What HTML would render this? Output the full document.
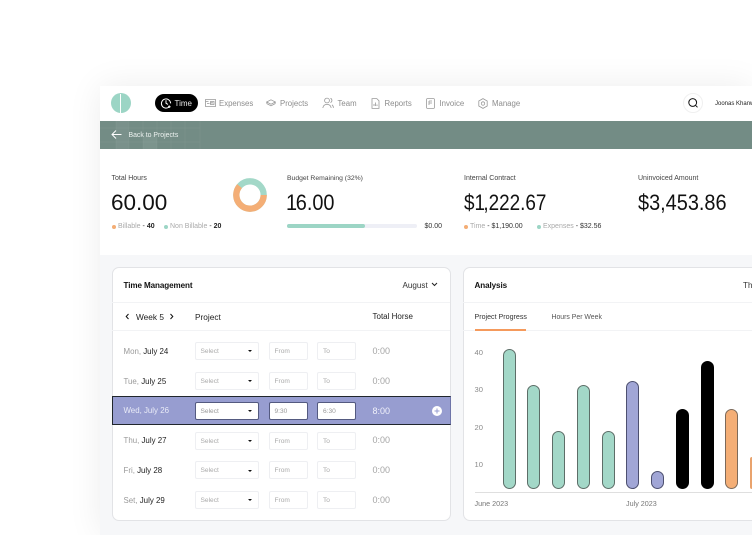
<!DOCTYPE html>
<html><head><meta charset="utf-8">
<style>
html,body{margin:0;padding:0;background:#fff;overflow:hidden}
#w{position:relative;width:752px;height:535px;overflow:hidden;background:#fff}
#p{position:absolute;left:0;top:0;width:752px;height:535px;overflow:hidden;background:#fff;font-family:"Liberation Sans",sans-serif;color:#111;filter:blur(.25px)}
#p div{position:absolute}
.t{position:absolute;white-space:nowrap;line-height:12px;height:12px}
.nav{font-size:7.800px;color:#8d8d8d;top:97.500px}
.big{font-size:22.500px;line-height:26px;height:26px;color:#111;top:190px;transform-origin:0 50%}
.big u{text-decoration:none}
.lab{font-size:7px;color:#444;top:172.500px}
.leg{font-size:7px;color:#aaa;top:220.500px}
.leg b{color:#222;font-weight:bold}
.leg i{font-style:normal;color:#333}
.dot{width:4px;height:4px;border-radius:50%;top:224.500px}
.box{background:#fff;border:1px solid #eeeff2;border-radius:2px;box-sizing:border-box;height:18px}
.sel{border-color:#545a80}
.ph{font-size:6.600px;color:#aaa}
.day{font-size:7.900px;color:#9a9a9a;left:123.500px}
.day b{font-weight:normal;color:#222}
.tot{font-size:9px;color:#a5a5a5;left:372.500px}
.car{width:0;height:0;border-left:2.500px solid transparent;border-right:2.500px solid transparent;border-top:2.500px solid #111}
.bar{width:13px;border-radius:7px;border:1px solid #5d6e68;box-sizing:border-box;background:#a3d8c8}
.pu{background:#a1a6d6;border-color:#4d5070}
.bk{background:#000;border-color:#000}
.yl{font-size:7.600px;color:#8a8a8a;left:474.500px}
</style></head><body>
<div id="w"><div id="p">
<!-- app shell -->
<div style="left:100px;top:86px;width:652px;height:449px;background:#f6f7f9;box-shadow:0 0 32px rgba(0,0,0,.075)"></div>
<div style="left:100px;top:86px;width:652px;height:35px;background:#fff"></div>
<div style="left:100px;top:121px;width:652px;height:28px;background:#738c85"></div>
<svg style="position:absolute;left:100px;top:121px" width="110" height="28"><g stroke="#8aa09a" stroke-width=".5" fill="none" opacity=".45"><path d="M16 0v28M29 0v28M43 0v28M57 0v28M71 0v28M85 0v28M100 0v28M0 7h100M0 21h100"/></g><rect x="16" y="0" width="13" height="28" fill="#fff" opacity=".05"/><rect x="43" y="14" width="14" height="14" fill="#fff" opacity=".07"/></svg>
<div style="left:100px;top:149px;width:652px;height:106px;background:#fff"></div>

<!-- logo -->
<div style="left:111px;top:93px;width:20px;height:20px;border-radius:50%;background:#9cd5c5"></div>
<div style="left:120.300px;top:94px;width:1.200px;height:19px;background:#fff"></div>

<!-- nav -->
<div style="left:155px;top:94px;width:43px;height:18px;border-radius:9px;background:#000"></div>
<svg style="position:absolute;left:160px;top:97px" width="12" height="12" fill="none" stroke="#fff" stroke-width="1"><path d="M9 10A4.600 4.600 0 1 1 10.600 6.400M6 3.200V6.200L8 7.400M9.200 8.400v2.600M8 9.700h2.600"/></svg>
<span class="t" style="left:174.500px;top:97.500px;font-size:8px;color:#e8e8e8">Time</span>

<svg style="position:absolute;left:205px;top:98px" width="11" height="10" fill="none" stroke="#999" stroke-width=".8"><path d="M.5 1.500h10v7H.5zM.5 3.500h3M2 5.500h2.500M5.500 3.500h3.500v3H5.500zM5.500 5.500l1.500-1 1 .8"/></svg>
<span class="t nav" style="left:219px">Expenses</span>
<svg style="position:absolute;left:266px;top:99px" width="10" height="9" fill="none" stroke="#999" stroke-width=".8"><path d="M5 .8 9.400 3 5 5.200.6 3zM.8 4.600 5 6.800l4.200-2.200M.8 3v1.600M9.200 3v1.600"/></svg>
<span class="t nav" style="left:280px">Projects</span>
<svg style="position:absolute;left:322px;top:97px" width="12" height="12" fill="none" stroke="#999" stroke-width=".8"><circle cx="5" cy="3.500" r="2.400"/><path d="M.8 11c.4-2.600 2-3.600 4.200-3.600S8.800 8.400 9.200 11M8.500 1.200a2.400 2.400 0 0 1 0 4.400M10 7.800c.8.500 1.300 1.500 1.500 3"/></svg>
<span class="t nav" style="left:337.500px">Team</span>
<svg style="position:absolute;left:371px;top:98px" width="9" height="11" fill="none" stroke="#999" stroke-width=".8"><path d="M1 .6h4.800L8 2.800v7.600H1zM3 8V6M4.500 8V4.500M6 8V6.500"/></svg>
<span class="t nav" style="left:384.500px">Reports</span>
<svg style="position:absolute;left:426px;top:98px" width="9" height="11" fill="none" stroke="#999" stroke-width=".8"><rect x=".6" y=".6" width="7.800" height="9.800" rx=".8"/><path d="M3 3h3M3 5h3M3 3v4"/></svg>
<span class="t nav" style="left:439.500px">Invoice</span>
<svg style="position:absolute;left:478px;top:98px" width="10" height="11" fill="none" stroke="#999" stroke-width=".8"><path d="M5 .6 9.200 3v5L5 10.400.8 8V3z"/><circle cx="5" cy="5.500" r="1.700"/></svg>
<span class="t nav" style="left:492px">Manage</span>

<!-- search -->
<div style="left:683px;top:93px;width:20px;height:20px;border-radius:50%;border:1px solid #f0f0f0;box-sizing:border-box;background:#fff"></div>
<svg style="position:absolute;left:687px;top:97px" width="12" height="12" fill="none" stroke="#111" stroke-width="1"><circle cx="5.700" cy="5.500" r="3.900"/><path d="M8.500 8.300l2 2"/></svg>
<span class="t" style="left:715px;top:97.500px;font-size:6px;color:#222">Joonas Khanwald</span>

<!-- back -->
<svg style="position:absolute;left:111px;top:129px" width="12" height="11" fill="none" stroke="#fff" stroke-width="1"><path d="M1 5.500h9.500M5 1.500l-4 4 4 4"/></svg>
<span class="t" style="left:128.500px;top:129.500px;font-size:6.900px;color:#edf2f0">Back to Projects</span>

<!-- stats -->
<span class="t lab" style="left:111.500px">Total Hours</span>
<span class="t big" style="left:111px">60.00</span>
<div class="dot" style="left:112px;background:#f4ad74"></div>
<span class="t leg" style="left:118px">Billable <i>-</i> <b>40</b></span>
<div class="dot" style="left:164px;background:#9cd5c5"></div>
<span class="t leg" style="left:170px">Non Billable <i>-</i> <b>20</b></span>
<svg style="position:absolute;left:233px;top:178px" width="34" height="34"><circle cx="17" cy="17" r="13.700" fill="none" stroke="#a3d8c8" stroke-width="6.300"/><circle cx="17" cy="17" r="13.700" fill="none" stroke="#f4ae76" stroke-width="6.300" stroke-dasharray="52.600 86.100"/></svg>

<span class="t lab" style="left:287px;font-size:6.800px">Budget Remaining (32%)</span>
<span class="t big" style="left:286px;transform:scaleX(.885)"><u style="letter-spacing:-1.500px">1</u>6.00</span>
<div style="left:287px;top:224px;width:130px;height:4px;border-radius:2px;background:#eeeff6"></div>
<div style="left:287px;top:224px;width:78px;height:4px;border-radius:2px;background:#9cd5c5"></div>
<span class="t" style="left:424.500px;top:220.500px;font-size:7px;color:#333">$0.00</span>

<span class="t lab" style="left:464px">Internal Contract</span>
<span class="t big" style="left:464px;transform:scaleX(.84)">$<u style="letter-spacing:-2px">1</u>,222.67</span>
<div class="dot" style="left:464px;background:#f4ad74"></div>
<span class="t leg" style="left:470px">Time <i>- $1,190.00</i></span>
<div class="dot" style="left:537px;background:#9cd5c5"></div>
<span class="t leg" style="left:543px">Expenses <i>- $32.56</i></span>

<span class="t lab" style="left:638px">Uninvoiced Amount</span>
<span class="t big" style="left:638px;transform:scaleX(.885)">$3,453.86</span>

<!-- left card -->
<div style="left:111.500px;top:266.500px;width:339px;height:254px;background:#fff;border:1px solid #e2e3e6;border-radius:7px;box-sizing:border-box"></div>
<div style="left:112px;top:302px;width:338px;height:1px;background:#f2f3f5"></div>
<div style="left:112px;top:329.500px;width:338px;height:1px;background:#f2f3f5"></div>
<span class="t" style="left:123.500px;top:279.500px;font-size:8.100px;color:#111;font-weight:bold;letter-spacing:-.1px">Time Management</span>
<span class="t" style="left:402.500px;top:279.500px;font-size:8.100px;color:#333">August</span>
<svg style="position:absolute;left:431px;top:282px" width="7" height="5" fill="none" stroke="#222" stroke-width="1"><path d="M1 1l2.500 2.500L6 1"/></svg>
<svg style="position:absolute;left:125px;top:313px" width="5" height="7" fill="none" stroke="#111" stroke-width="1"><path d="M3.500 1L1.200 3.500 3.500 6"/></svg>
<span class="t" style="left:136px;top:310.500px;font-size:8.300px;color:#222">Week 5</span>
<svg style="position:absolute;left:169px;top:313px" width="5" height="7" fill="none" stroke="#111" stroke-width="1"><path d="M1.500 1l2.300 2.500L1.500 6"/></svg>
<span class="t" style="left:195px;top:310.500px;font-size:8.300px;color:#222">Project</span>
<span class="t" style="left:372.500px;top:310.500px;font-size:8px;color:#222">Total Horse</span>

<!-- rows -->
<span class="t day" style="top:345.500px">Mon, <b>July 24</b></span>
<div class="box" style="left:195px;top:342px;width:64px"></div><span class="t ph" style="left:200.500px;top:346px">Select</span><div class="car" style="left:247.500px;top:350px"></div>
<div class="box" style="left:269px;top:342px;width:39px"></div><span class="t ph" style="left:274.500px;top:346px">From</span>
<div class="box" style="left:317px;top:342px;width:39px"></div><span class="t ph" style="left:323px;top:346px">To</span>
<span class="t tot" style="top:345px">0:00</span>

<span class="t day" style="top:375.500px">Tue, <b>July 25</b></span>
<div class="box" style="left:195px;top:372px;width:64px"></div><span class="t ph" style="left:200.500px;top:376px">Select</span><div class="car" style="left:247.500px;top:380px"></div>
<div class="box" style="left:269px;top:372px;width:39px"></div><span class="t ph" style="left:274.500px;top:376px">From</span>
<div class="box" style="left:317px;top:372px;width:39px"></div><span class="t ph" style="left:323px;top:376px">To</span>
<span class="t tot" style="top:375px">0:00</span>

<div style="left:111.500px;top:396px;width:339px;height:29px;background:#979dd0;border:1px solid #20262c;border-right-color:#6e74a8;box-sizing:border-box"></div>
<span class="t day" style="top:405px;color:#e9ebf7">Wed, July 26</span>
<div class="box sel" style="left:195px;top:402px;width:64px"></div><span class="t ph" style="left:200.500px;top:405.500px;color:#999">Select</span><div class="car" style="left:247.500px;top:409.500px"></div>
<div class="box sel" style="left:269px;top:402px;width:39px"></div><span class="t ph" style="left:274.500px;top:405.500px;color:#999">9:30</span>
<div class="box sel" style="left:317px;top:402px;width:39px"></div><span class="t ph" style="left:323px;top:405.500px;color:#999">6:30</span>
<span class="t tot" style="top:404.500px;color:#f0f1fa">8:00</span>
<div style="left:432px;top:405.500px;width:10px;height:10px;border-radius:50%;background:#fff"></div>
<svg style="position:absolute;left:432px;top:405.500px" width="10" height="10" stroke="#979dd0" stroke-width="1"><path d="M5 2.500v5M2.500 5h5"/></svg>

<span class="t day" style="top:434.500px">Thu, <b>July 27</b></span>
<div class="box" style="left:195px;top:431.500px;width:64px"></div><span class="t ph" style="left:200.500px;top:435.500px">Select</span><div class="car" style="left:247.500px;top:439.500px"></div>
<div class="box" style="left:269px;top:431.500px;width:39px"></div><span class="t ph" style="left:274.500px;top:435.500px">From</span>
<div class="box" style="left:317px;top:431.500px;width:39px"></div><span class="t ph" style="left:323px;top:435.500px">To</span>
<span class="t tot" style="top:434px">0:00</span>

<span class="t day" style="top:464.500px">Fri, <b>July 28</b></span>
<div class="box" style="left:195px;top:461px;width:64px"></div><span class="t ph" style="left:200.500px;top:465px">Select</span><div class="car" style="left:247.500px;top:469.500px"></div>
<div class="box" style="left:269px;top:461px;width:39px"></div><span class="t ph" style="left:274.500px;top:465px">From</span>
<div class="box" style="left:317px;top:461px;width:39px"></div><span class="t ph" style="left:323px;top:465px">To</span>
<span class="t tot" style="top:464px">0:00</span>

<span class="t day" style="top:494.500px">Set, <b>July 29</b></span>
<div class="box" style="left:195px;top:491px;width:64px"></div><span class="t ph" style="left:200.500px;top:495px">Select</span><div class="car" style="left:247.500px;top:499px"></div>
<div class="box" style="left:269px;top:491px;width:39px"></div><span class="t ph" style="left:274.500px;top:495px">From</span>
<div class="box" style="left:317px;top:491px;width:39px"></div><span class="t ph" style="left:323px;top:495px">To</span>
<span class="t tot" style="top:494px">0:00</span>

<!-- right card -->
<div style="left:462.500px;top:266.500px;width:300px;height:254px;background:#fff;border:1px solid #e2e3e6;border-radius:7px;box-sizing:border-box"></div>
<div style="left:463px;top:302px;width:289px;height:1px;background:#f2f3f5"></div>
<div style="left:463px;top:330px;width:289px;height:1px;background:#f2f3f5"></div>
<div style="left:474.500px;top:329px;width:51.500px;height:2px;background:#f59a5c;z-index:2"></div>
<span class="t" style="left:474.500px;top:279.500px;font-size:8.100px;color:#111;font-weight:bold;letter-spacing:-.1px">Analysis</span>
<span class="t" style="left:743px;top:279.500px;font-size:8.100px;color:#333">This</span>
<span class="t" style="left:474.500px;top:311px;font-size:7.100px;color:#333">Project Progress</span>
<span class="t" style="left:551.500px;top:311.500px;font-size:6.900px;color:#555">Hours Per Week</span>

<span class="t yl" style="top:346.500px">40</span>
<span class="t yl" style="top:384px">30</span>
<span class="t yl" style="top:421.500px">20</span>
<span class="t yl" style="top:459px">10</span>

<div class="bar" style="left:502.500px;top:349px;height:140px"></div>
<div class="bar" style="left:527.300px;top:385px;height:104px"></div>
<div class="bar" style="left:552px;top:431px;height:58px"></div>
<div class="bar" style="left:576.800px;top:385px;height:104px"></div>
<div class="bar" style="left:601.500px;top:431px;height:58px"></div>
<div class="bar pu" style="left:626.300px;top:381px;height:108px"></div>
<div class="bar pu" style="left:651px;top:470.500px;height:18.500px"></div>
<div class="bar bk" style="left:675.800px;top:408.700px;height:80.300px"></div>
<div class="bar bk" style="left:700.500px;top:361px;height:128px"></div>
<div class="bar" style="left:725.300px;top:408.700px;height:80.300px;background:#f4ae76;border-color:#7d6a5a"></div>
<div class="bar" style="left:750.300px;top:457px;height:32px;width:2px;border-radius:2px 0 0 2px;border:0;background:#e9a36d"></div>
<div style="left:474.500px;top:492px;width:278px;height:1px;background:#dfdfdf"></div>
<span class="t" style="left:474.500px;top:498px;font-size:7.200px;color:#777">June 2023</span>
<span class="t" style="left:626px;top:498px;font-size:7.200px;color:#777">July 2023</span>
</div></div>
</body></html>
